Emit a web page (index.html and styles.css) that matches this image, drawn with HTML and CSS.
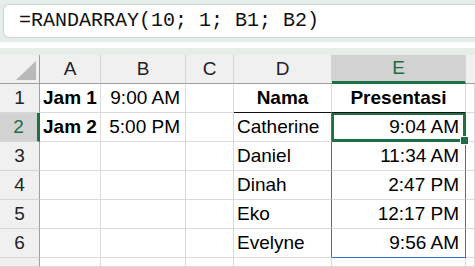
FILE: index.html
```html
<!DOCTYPE html>
<html lang="id">
<head>
  <meta charset="UTF-8">
  <title>RANDARRAY</title>
  <link rel="stylesheet" href="styles.css">
</head>
<body>

  <div class="formula-area">
    <div class="formula-box">=RANDARRAY(10; 1; B1; B2)</div>
  </div>
  <div class="formula-gap"></div>

  <div class="sheet">
    <!-- header -->
    <div class="hd corner"><span class="tri"></span></div>
    <div class="hd">A</div>
    <div class="hd">B</div>
    <div class="hd">C</div>
    <div class="hd">D</div>
    <div class="hd sel-col">E</div>
    <div class="hd fill"></div>

    <!-- row 1 -->
    <div class="rh">1</div>
    <div class="c bold">Jam 1</div>
    <div class="c right">9:00 AM</div>
    <div class="c"></div>
    <div class="c bold center th">Nama</div>
    <div class="c bold center th">Presentasi</div>
    <div class="c"></div>

    <!-- row 2 -->
    <div class="rh sel-row">2</div>
    <div class="c bold">Jam 2</div>
    <div class="c right">5:00 PM</div>
    <div class="c"></div>
    <div class="c spill-left">Catherine</div>
    <div class="c right spill active">9:04 AM<span class="handle"></span></div>
    <div class="c"></div>

    <!-- row 3 -->
    <div class="rh">3</div>
    <div class="c"></div>
    <div class="c"></div>
    <div class="c"></div>
    <div class="c spill-left">Daniel</div>
    <div class="c right spill">11:34 AM</div>
    <div class="c"></div>

    <!-- row 4 -->
    <div class="rh">4</div>
    <div class="c"></div>
    <div class="c"></div>
    <div class="c"></div>
    <div class="c spill-left">Dinah</div>
    <div class="c right spill">2:47 PM</div>
    <div class="c"></div>

    <!-- row 5 -->
    <div class="rh">5</div>
    <div class="c"></div>
    <div class="c"></div>
    <div class="c"></div>
    <div class="c spill-left">Eko</div>
    <div class="c right spill">12:17 PM</div>
    <div class="c"></div>

    <!-- row 6 -->
    <div class="rh">6</div>
    <div class="c"></div>
    <div class="c"></div>
    <div class="c"></div>
    <div class="c spill-left">Evelyne</div>
    <div class="c right spill spill-end">9:56 AM</div>
    <div class="c"></div>

    <!-- row 7 (cut off) -->
    <div class="rh"></div>
    <div class="c"></div>
    <div class="c"></div>
    <div class="c"></div>
    <div class="c"></div>
    <div class="c"></div>
    <div class="c"></div>
  </div>

</body>
</html>
```

FILE: styles.css
```css
body {
  margin: 0;
  background: #fff;
  font-family: "Liberation Sans", Arial, sans-serif;
  color: #000;
  overflow: hidden;
  height: 267px;
}

.formula-area {
  background: #e6eeea;
  height: 42px;
  padding: 4px 0 0 3px;
  box-sizing: border-box;
}

.formula-box {
  background: #fff;
  height: 34px;
  border: 1px solid #cfd4d2;
  border-right: none;
  border-radius: 6px 0 0 6px;
  box-sizing: border-box;
  padding-left: 15px;
  font-family: "Liberation Mono", "DejaVu Sans Mono", monospace;
  font-size: 20px;
  line-height: 32px;
  color: #111;
}

.formula-gap {
  height: 6px;
  background: #fff;
  border-bottom: 7px solid #e6eeea;
}

.sheet {
  display: grid;
  grid-template-columns: 40px 61px 85px 48px 98px 134px 1fr;
  grid-template-rows: repeat(7, 29px) 9px;
  font-size: 19px;
}

.hd {
  background: #f0f0f0;
  border-right: 1px solid #d6d6d6;
  border-bottom: 1px solid #9e9e9e;
  display: flex;
  align-items: center;
  justify-content: center;
  color: #222;
}

.hd.corner {
  border-right: 1px solid #9e9e9e;
  position: relative;
}

.tri {
  position: absolute;
  right: 3px;
  bottom: 3px;
  width: 0;
  height: 0;
  border-left: 20px solid transparent;
  border-bottom: 19px solid #b9b9b9;
}

.hd.sel-col {
  background: #d2d2d2;
  color: #1f6b42;
  border-bottom: 3px solid #1e6f43;
}

.hd.fill {
  border-right: none;
}

.rh {
  background: #f0f0f0;
  border-right: 1px solid #9e9e9e;
  border-bottom: 1px solid #d6d6d6;
  display: flex;
  align-items: center;
  justify-content: center;
  color: #222;
}

.rh.sel-row {
  background: #d2d2d2;
  color: #1f6b42;
  border-right: 3px solid #1e6f43;
}

.c {
  border-right: 1px solid #dadada;
  border-bottom: 1px solid #dadada;
  display: flex;
  align-items: center;
  padding: 0 3px;
  white-space: nowrap;
}

.bold {
  font-weight: bold;
}

.right {
  justify-content: flex-end;
  padding-right: 5px;
}

.center {
  justify-content: center;
}

.th {
  border-bottom: 1px solid #111;
}

.spill-left {
  border-right-color: #3d6cc4;
}

.spill {
  border-right-color: #3d6cc4;
  padding-right: 6px;
}

.spill-end {
  border-bottom-color: #3d6cc4;
}

.active {
  position: relative;
  box-shadow: inset 0 0 0 2px #1e6f43;
  border-bottom: 1px solid #1e6f43;
  border-right-color: #1e6f43;
}

.handle {
  position: absolute;
  right: -4px;
  bottom: -4px;
  width: 7px;
  height: 7px;
  background: #1e6f43;
  border: 1px solid #fff;
  z-index: 2;
}
```
